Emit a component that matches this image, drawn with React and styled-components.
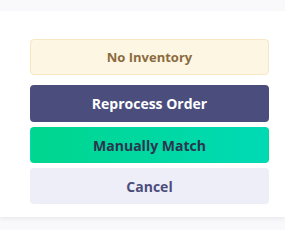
import React from "react";
import styled, { createGlobalStyle } from "styled-components";

const GlobalStyle = createGlobalStyle`
  html, body {
    margin: 0;
    padding: 0;
    background: #f9f9fc;
    font-family: "Open Sans", "Liberation Sans", sans-serif;
  }
`;

const Page = styled.div`
  padding-top: 11px;
  height: 230px;
  box-sizing: border-box;
`;

const Card = styled.div`
  background: #ffffff;
  box-shadow: 0 2px 4px rgba(40, 40, 80, 0.08);
  padding: 28px 16px 13px 30px;
  display: flex;
  flex-direction: column;
  gap: 5px;
`;

const Button = styled.button`
  height: 36px;
  width: 100%;
  border-radius: 4px;
  border: 1px solid transparent;
  font-family: inherit;
  font-weight: 700;
  font-size: 14px;
  cursor: pointer;
  display: flex;
  align-items: center;
  justify-content: center;
  padding: 0;
`;

const StatusBox = styled(Button)`
  background: #fdf6e3;
  border-color: #f7e7c3;
  color: #8b6b3e;
  font-size: 13px;
  margin-bottom: 5px;
  cursor: default;
`;

const Primary = styled(Button)`
  height: 37px;
  background: #4b4d7c;
  color: #ffffff;
`;

const Match = styled(Button)`
  background: linear-gradient(90deg, #00d68e 0%, #00dab5 100%);
  color: #2b3550;
`;

const Secondary = styled(Button)`
  background: #eeeef8;
  color: #4b4d7c;
`;

export default function App() {
  return (
    <>
      <GlobalStyle />
      <Page>
        <Card>
          <StatusBox>No Inventory</StatusBox>
          <Primary>Reprocess Order</Primary>
          <Match>Manually Match</Match>
          <Secondary>Cancel</Secondary>
        </Card>
      </Page>
    </>
  );
}
